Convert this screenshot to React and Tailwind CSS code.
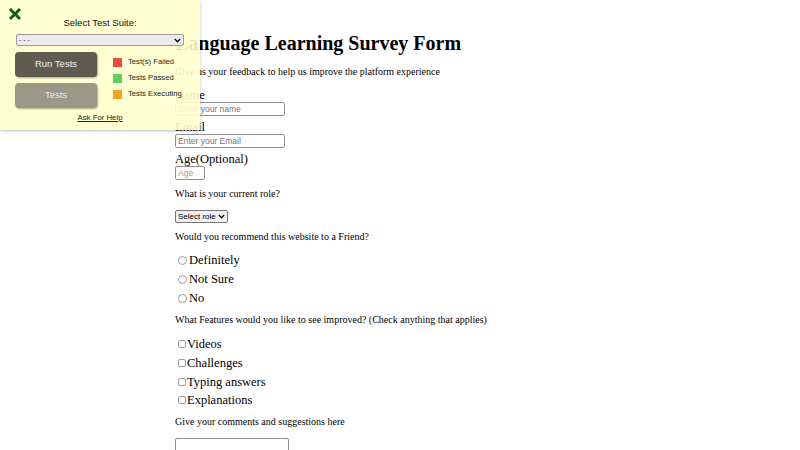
import React from "react";

export default function App() {
  const serif = { fontFamily: '"Liberation Serif", "Times New Roman", serif' };
  const sans = { fontFamily: '"Liberation Sans", Arial, sans-serif' };
  return (
    <div className="relative w-[800px] h-[450px] overflow-hidden bg-white text-black" style={serif}>
      <main className="pl-[175px]">
        <h1 className="pt-[31px] text-[20px] leading-[24px] font-bold">Language Learning Survey Form</h1>
        <p className="mt-[9px] text-[10px] leading-[16px]">Give us your feedback to help us improve the platform experience</p>
        <form className="flex flex-col items-start">
          <label className="mt-[8px] text-[12.5px] leading-[14px]">Name</label>
          <input
            placeholder="Enter your name"
            className="w-[110px] h-[14px] border border-[#8f8f8f] rounded-[2px] px-[2px] text-[8.5px] placeholder:text-[#757575]"
            style={sans}
          />
          <label className="mt-[4px] text-[12.5px] leading-[14px]">Email</label>
          <input
            placeholder="Enter your Email"
            className="w-[110px] h-[14px] border border-[#8f8f8f] rounded-[2px] px-[2px] text-[8.5px] placeholder:text-[#757575]"
            style={sans}
          />
          <label className="mt-[4px] text-[12.5px] leading-[14px]">Age(Optional)</label>
          <input
            placeholder="Age"
            className="w-[30px] h-[14px] border border-[#8f8f8f] rounded-[2px] px-[2px] text-[8.5px] placeholder:text-[#a0a0a0]"
            style={sans}
          />
          <p className="mt-[6px] text-[10px] leading-[16px]">What is your current role?</p>
          <div
            className="mt-[8px] h-[13px] w-[53px] border border-[#767676] rounded-[2px] bg-[#f0f0f0] flex items-center justify-between px-[2px] text-[8px] whitespace-nowrap"
            style={sans}
          >
            <span>Select role</span>
            <svg width="7" height="5" viewBox="0 0 7 5"><path d="M0.8 1 L3.5 3.8 L6.2 1" fill="none" stroke="#000" strokeWidth="1.3" /></svg>
          </div>
          <p className="mt-[6px] text-[10px] leading-[16px]">Would you recommend this website to a Friend?</p>
          <div className="mt-[6px] flex flex-col">
            {["Definitely", "Not Sure", "No"].map((t) => (
              <div key={t} className="h-[19px] flex items-center text-[12.5px] leading-[19px]">
                <span className="ml-[3px] mr-[2px] w-[9px] h-[9px] rounded-full border border-[#9a9a9a] bg-white" />
                <span>{t}</span>
              </div>
            ))}
          </div>
          <p className="mt-[4px] text-[10px] leading-[16px]">What Features would you like to see improved? (Check anything that applies)</p>
          <div className="mt-[7px] flex flex-col">
            {["Videos", "Challenges", "Typing answers", "Explanations"].map((t) => (
              <div key={t} className="h-[18.7px] flex items-center text-[12.5px] leading-[18px]">
                <span className="ml-[3px] mr-[1px] w-[8px] h-[8px] rounded-[2px] border border-[#9a9a9a] bg-white" />
                <span>{t}</span>
              </div>
            ))}
          </div>
          <p className="mt-[4px] text-[10px] leading-[16px]">Give your comments and suggestions here</p>
          <div className="mt-[8px] w-[114px] h-[40px] border border-[#8f8f8f] rounded-[2px]" />
        </form>
      </main>

      <div
        className="absolute left-0 top-0 w-[200px] h-[130px] bg-[rgba(255,255,204,0.9)] shadow-[0_1px_3px_rgba(0,0,0,0.25)] flex flex-col"
        style={sans}
      >
        <svg className="absolute left-[8px] top-[7px]" width="14" height="14" viewBox="0 0 14 14">
          <path d="M2 2 L12 12 M12 2 L2 12" stroke="#0c650c" strokeWidth="3" strokeLinecap="butt" />
        </svg>
        <div className="pt-[17px] text-center text-[9.5px] leading-[12px] text-[#111]">Select Test Suite:</div>
        <div className="mt-[5px] mx-[16px] h-[12px] bg-[#ececec] border border-[#9a9a9a] rounded-[2px] flex items-center justify-between px-[2px] text-[7px] text-[#333]">
          <span>- - -</span>
          <svg width="7" height="5" viewBox="0 0 7 5"><path d="M0.8 1 L3.5 3.8 L6.2 1" fill="none" stroke="#000" strokeWidth="1.3" /></svg>
        </div>
        <div className="mt-[6px] flex">
          <div className="ml-[15px] flex flex-col gap-[6px]">
            <div className="w-[82px] h-[25px] rounded-[4px] bg-[#5e5c51] text-[#f0f0f0] text-[9.5px] flex items-center justify-center shadow-[1px_1px_2px_rgba(0,0,0,0.35)]">Run Tests</div>
            <div className="w-[82px] h-[25px] rounded-[4px] bg-[#9a9887] text-[#ebebe6] text-[9.5px] flex items-center justify-center shadow-[1px_1px_2px_rgba(0,0,0,0.35)]">Tests</div>
          </div>
          <div className="ml-[16px] mt-[2px] flex flex-col text-[7.7px] text-[#222]">
            {[
              ["#f04a3c", "Test(s) Failed"],
              ["#5fd35a", "Tests Passed"],
              ["#f5a21e", "Tests Executing"],
            ].map(([c, t]) => (
              <div key={t} className="h-[16px] flex items-center">
                <span className="w-[9px] h-[9px] mr-[6px]" style={{ backgroundColor: c }} />
                <span>{t}</span>
              </div>
            ))}
          </div>
        </div>
        <div className="mt-[5px] text-center text-[7.8px] leading-[10px] underline text-[#222]">Ask For Help</div>
      </div>
    </div>
  );
}
